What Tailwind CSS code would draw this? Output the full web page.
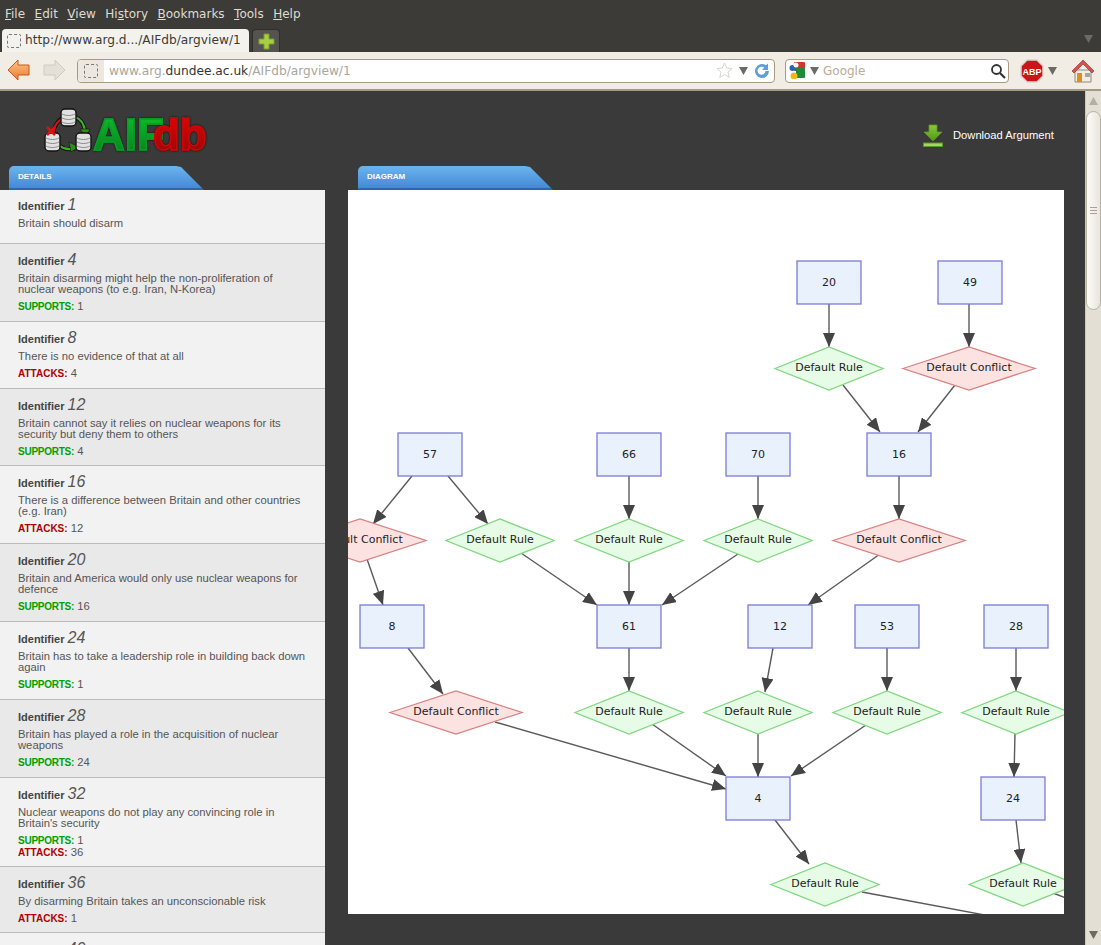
<!DOCTYPE html>
<html lang="en">
<head>
    <meta charset="UTF-8">
    <title>AIFdb argview</title>
    <script src="https://cdn.jsdelivr.net/npm/@tailwindcss/browser@4"></script>
</head>
<body class="bg-[#3a3a3a] overflow-hidden font-['Liberation_Sans',sans-serif]">
<div class="w-[1101px] h-[945px] flex flex-col overflow-hidden">

    <!-- Menu bar -->
    <div class="h-[26px] shrink-0 bg-[#3c3b37] flex items-center pl-[5px] gap-[9.5px] pt-[1px] font-['DejaVu_Sans',sans-serif] text-[12px] text-[#dfdbd2]">
        <span><u>F</u>ile</span>
        <span><u>E</u>dit</span>
        <span><u>V</u>iew</span>
        <span>Hi<u>s</u>tory</span>
        <span><u>B</u>ookmarks</span>
        <span><u>T</u>ools</span>
        <span><u>H</u>elp</span>
    </div>

    <!-- Tab bar -->
    <div class="h-[26px] shrink-0 bg-[#3c3b37] flex items-end pl-[2px] gap-[3px] relative">
        <div class="w-[247px] h-[23px] bg-[#f4f2ec] rounded-t-[4px] flex items-center pl-[5px] gap-[4px] font-['DejaVu_Sans',sans-serif] text-[12.2px] text-[#3c3b37]">
            <div class="w-[14px] h-[14px] rounded-[2px] border border-dashed border-[#777]"></div>
            <span>http://www.arg.d.../AIFdb/argview/1</span>
        </div>
        <div class="w-[28px] h-[23px] bg-[#55534e] rounded-t-[4px] flex items-center justify-center border border-b-0 border-[#2f2e2b]">
            <svg width="17" height="17" viewBox="0 0 17 17"><path d="M6 1h5v5h5v5h-5v5H6v-5H1V6h5z" fill="#a6cf45" stroke="#7d9c2c"/></svg>
        </div>
        <svg class="absolute right-[8px] top-[9px]" width="9" height="8" viewBox="0 0 9 8"><path d="M0 0h9L4.500 8z" fill="#6b6a65"/></svg>
    </div>

    <!-- Nav bar -->
    <div class="h-[39px] shrink-0 bg-[#f1ede5] border-b-2 border-[#a39a86] flex items-center">
        <svg class="ml-[7px]" width="23" height="24" viewBox="0 0 23 24">
            <defs><linearGradient id="back" x1="0" y1="0" x2="0" y2="1"><stop offset="0" stop-color="#fbc48c"/><stop offset="1" stop-color="#ea7c2c"/></linearGradient></defs>
            <path d="M11 1 1 11l10 10v-5h11V6H11z" fill="url(#back)" stroke="#c8591a"/>
        </svg>
        <svg class="ml-[13px]" width="23" height="24" viewBox="0 0 23 24"><path d="M12 1l10 10-10 10v-5H1V6h11z" fill="#e4e0d8" stroke="#cfcabf"/></svg>
        <!-- url box -->
        <div class="ml-[11px] w-[698px] h-[24px] bg-white border border-[#a79a80] rounded-[4px] flex items-center overflow-hidden">
            <div class="w-[26px] h-full bg-[#ece8e0] flex items-center justify-center shrink-0">
                <div class="w-[14px] h-[14px] rounded-[2px] border border-dashed border-[#777]"></div>
            </div>
            <div class="ml-[5px] pt-[1px] flex-1 font-['DejaVu_Sans',sans-serif] text-[12.2px] text-[#a9a59e]">www.arg.<span class="text-[#2e3436]">dundee.ac.uk</span>/AIFdb/argview/1</div>
            <svg width="17" height="17" viewBox="0 0 17 17"><path d="M8.500 1l2.200 5 5.300.5-4 3.600 1.200 5.300-4.700-2.800-4.700 2.800L5 10.100l-4-3.600L6.300 6z" fill="#fff" stroke="#d5d3ce"/></svg>
            <svg class="ml-[6px]" width="9" height="8" viewBox="0 0 9 8"><path d="M0 0h9L4.500 8z" fill="#6b6a65"/></svg>
            <svg class="ml-[6px] mr-[4px]" width="16" height="16" viewBox="0 0 16 16"><path d="M15 8a7 7 0 1 1-3-5.800L14 .5V7H8l2.200-2.200A4 4 0 1 0 11.500 8z" fill="#5d9edb"/></svg>
        </div>
        <!-- search box -->
        <div class="ml-[10px] w-[224px] h-[24px] bg-white border border-[#a79a80] rounded-[4px] flex items-center">
            <svg class="ml-[3px]" width="17" height="17" viewBox="0 0 17 17">
                <rect x="5" y="0" width="11" height="9" rx="1" fill="#d4352b"/>
                <rect x="7" y="6" width="9" height="10" rx="1" fill="#1f8a3a"/>
                <circle cx="3.500" cy="6" r="3" fill="#2266b8"/>
                <circle cx="7" cy="3" r="2.500" fill="#fff"/>
                <circle cx="5" cy="14" r="3.500" fill="#f2b619"/>
            </svg>
            <svg class="ml-[4px]" width="9" height="8" viewBox="0 0 9 8"><path d="M0 0h9L4.500 8z" fill="#6b6a65"/></svg>
            <span class="ml-[4px] pt-[1px] flex-1 font-['DejaVu_Sans',sans-serif] text-[12px] text-[#b9ab96]">Google</span>
            <svg class="mr-[2px]" width="16" height="16" viewBox="0 0 16 16"><circle cx="6.500" cy="6.500" r="4.500" fill="none" stroke="#333" stroke-width="1.800"/><path d="M10 10l5 5" stroke="#333" stroke-width="2.200"/></svg>
        </div>
        <svg class="ml-[11px]" width="24" height="24" viewBox="0 0 24 24">
            <path d="M7 1h10l6 6v10l-6 6H7l-6-6V7z" fill="#c9161a" stroke="#d9d6d0" stroke-width="1.500"/>
            <text x="12" y="15.500" text-anchor="middle" font-family="Liberation Sans" font-weight="700" font-size="9" fill="#fff">ABP</text>
        </svg>
        <svg class="ml-[4px]" width="9" height="8" viewBox="0 0 9 8"><path d="M0 0h9L4.500 8z" fill="#6b6a65"/></svg>
        <svg class="ml-[14px]" width="24" height="24" viewBox="0 0 24 24">
            <path d="M4 11h16v12H4z" fill="#f1eee6" stroke="#8b8980"/>
            <path d="M12 1 1 12l2 2 9-9 9 9 2-2z" fill="#d1524f" stroke="#a83230" stroke-width=".7"/>
            <rect x="6" y="14" width="5" height="9" fill="#d9901c"/>
            <rect x="14" y="14" width="5" height="4" fill="#a7a59f"/>
        </svg>
    </div>

    <!-- Page -->
    <div class="flex-1 flex min-h-0">
        <div class="w-[1085px] shrink-0 flex flex-col min-h-0">

            <!-- Site header -->
            <div class="h-[75px] shrink-0 flex relative">
                <svg class="ml-[44px] mt-[17px] shrink-0" width="49" height="46" viewBox="0 0 49 46">
                    <path d="M9 26C10 17 15 11 21 9" fill="none" stroke="#111" stroke-width="4"/>
                    <path d="M9 26C10 17 15 11 21 9" fill="none" stroke="#e01010" stroke-width="2.200"/>
                    <path d="M31 9c6 2 9 7 10 14" fill="none" stroke="#111" stroke-width="4"/>
                    <path d="M31 9c6 2 9 7 10 14" fill="none" stroke="#3cb521" stroke-width="2.200"/>
                    <path d="M36 21l10 0-4 8z" fill="#2e8f16" stroke="#111" stroke-width=".6"/>
                    <path d="M16 38c5 4 10 4 16 2" fill="none" stroke="#111" stroke-width="4"/>
                    <path d="M16 38c5 4 10 4 16 2" fill="none" stroke="#3cb521" stroke-width="2.200"/>
                    <path d="M25 34l10 5-8 5z" fill="#2e8f16" stroke="#111" stroke-width=".6"/>
                    <g stroke="#111" stroke-width="1.400">
                        <rect x="17" y="1" width="15" height="17" rx="4" fill="#e2e2e2"/>
                        <rect x="1" y="25" width="15" height="18" rx="4" fill="#e2e2e2"/>
                        <rect x="32" y="25" width="15" height="18" rx="4" fill="#e2e2e2"/>
                    </g>
                    <path d="M18 6c4 2 9 2 13 0M18 10c4 2 9 2 13 0M18 14c4 2 9 2 13 0M2 30c4 2 9 2 13 0M2 34c4 2 9 2 13 0M2 38c4 2 9 2 13 0M33 30c4 2 9 2 13 0M33 34c4 2 9 2 13 0M33 38c4 2 9 2 13 0" fill="none" stroke="#8a8a8a"/>
                    <path d="M3 19l8 8M11 19l-8 8" stroke="#e01010" stroke-width="2.500"/>
                </svg>
                <div class="mt-[18px] h-[52px] text-[44px] font-bold leading-[52px] flex drop-shadow-[0_0_1px_#111]">
                    <span class="bg-linear-to-b from-[#12c430] to-[#047a1c] bg-clip-text text-transparent [-webkit-text-stroke:1.5px_#0a9c26]">AIF</span>
                    <span class="ml-[-11px] bg-linear-to-b from-[#f00000] to-[#8f0606] bg-clip-text text-transparent [-webkit-text-stroke:1.5px_#c80a0a]">db</span>
                </div>
                <div class="absolute left-[923px] top-[33px] flex items-center gap-[10px]">
                    <svg width="20" height="23" viewBox="0 0 20 23">
                        <defs><linearGradient id="dl" x1="0" y1="0" x2="0" y2="1"><stop offset="0" stop-color="#8cc63f"/><stop offset="1" stop-color="#4f9a12"/></linearGradient></defs>
                        <path d="M6 1h8v7h5l-9 9-9-9h5z" fill="url(#dl)" stroke="#5c9a1c" stroke-width=".8"/>
                        <rect x="0.500" y="19" width="19" height="3.500" fill="#a6d465" stroke="#5c9a1c"/>
                    </svg>
                    <span class="text-[11.2px] text-white">Download Argument</span>
                </div>
            </div>

            <div class="flex-1 flex min-h-0">
                <!-- Details column -->
                <div class="w-[325px] shrink-0 flex flex-col min-h-0">
                    <div class="h-[24px] shrink-0 ml-[9px] w-[195px] pl-[9px] pt-[4px] rounded-tl-[5px] border-b-2 border-[#2c68b0] bg-linear-to-b from-[#6cb4ee] to-[#4589d6] [clip-path:polygon(0_0,167px_0,172px_1px,195px_24px,0_24px)] text-[8px] font-bold text-white leading-[13px]">DETAILS</div>
                    <div class="flex-1 overflow-hidden text-[11.25px] text-[#555] leading-[11px]">
                        <div class="bg-[#f2f2f2] border-b border-[#bbb] pt-[6px] pb-[14px] px-[18px]">
                            <div class="h-[22px] leading-[17px] text-[11px] font-bold text-[#444]">Identifier <span class="text-[16px] italic font-normal text-[#555]">1</span></div>
                            <div>Britain should disarm</div>
                        </div>
                        <div class="bg-[#e9e9e9] border-b border-[#bbb] pt-[7px] pb-[9px] px-[18px]">
                            <div class="h-[22px] leading-[18px] text-[11px] font-bold text-[#444]">Identifier <span class="text-[16px] italic font-normal text-[#555]">4</span></div>
                            <div>Britain disarming might help the non-proliferation of<br>nuclear weapons (to e.g. Iran, N-Korea)</div>
                            <div class="mt-[5px] leading-[12px]"><b class="text-[10px] leading-[10px] tracking-[-0.25px] text-[#00a000]">SUPPORTS:</b> 1</div>
                        </div>
                        <div class="bg-[#f2f2f2] border-b border-[#bbb] pt-[7px] pb-[9px] px-[18px]">
                            <div class="h-[22px] leading-[18px] text-[11px] font-bold text-[#444]">Identifier <span class="text-[16px] italic font-normal text-[#555]">8</span></div>
                            <div>There is no evidence of that at all</div>
                            <div class="mt-[5px] leading-[12px]"><b class="text-[10px] leading-[10px] text-[#b00000]">ATTACKS:</b> 4</div>
                        </div>
                        <div class="bg-[#e9e9e9] border-b border-[#bbb] pt-[7px] pb-[8px] px-[18px]">
                            <div class="h-[22px] leading-[18px] text-[11px] font-bold text-[#444]">Identifier <span class="text-[16px] italic font-normal text-[#555]">12</span></div>
                            <div>Britain cannot say it relies on nuclear weapons for its<br>security but deny them to others</div>
                            <div class="mt-[5px] leading-[12px]"><b class="text-[10px] leading-[10px] tracking-[-0.25px] text-[#00a000]">SUPPORTS:</b> 4</div>
                        </div>
                        <div class="bg-[#f2f2f2] border-b border-[#bbb] pt-[7px] pb-[9px] px-[18px]">
                            <div class="h-[22px] leading-[18px] text-[11px] font-bold text-[#444]">Identifier <span class="text-[16px] italic font-normal text-[#555]">16</span></div>
                            <div>There is a difference between Britain and other countries<br>(e.g. Iran)</div>
                            <div class="mt-[5px] leading-[12px]"><b class="text-[10px] leading-[10px] text-[#b00000]">ATTACKS:</b> 12</div>
                        </div>
                        <div class="bg-[#e9e9e9] border-b border-[#bbb] pt-[7px] pb-[9px] px-[18px]">
                            <div class="h-[22px] leading-[18px] text-[11px] font-bold text-[#444]">Identifier <span class="text-[16px] italic font-normal text-[#555]">20</span></div>
                            <div>Britain and America would only use nuclear weapons for<br>defence</div>
                            <div class="mt-[5px] leading-[12px]"><b class="text-[10px] leading-[10px] tracking-[-0.25px] text-[#00a000]">SUPPORTS:</b> 16</div>
                        </div>
                        <div class="bg-[#f2f2f2] border-b border-[#bbb] pt-[7px] pb-[9px] px-[18px]">
                            <div class="h-[22px] leading-[18px] text-[11px] font-bold text-[#444]">Identifier <span class="text-[16px] italic font-normal text-[#555]">24</span></div>
                            <div>Britain has to take a leadership role in building back down<br>again</div>
                            <div class="mt-[5px] leading-[12px]"><b class="text-[10px] leading-[10px] tracking-[-0.25px] text-[#00a000]">SUPPORTS:</b> 1</div>
                        </div>
                        <div class="bg-[#e9e9e9] border-b border-[#bbb] pt-[7px] pb-[9px] px-[18px]">
                            <div class="h-[22px] leading-[18px] text-[11px] font-bold text-[#444]">Identifier <span class="text-[16px] italic font-normal text-[#555]">28</span></div>
                            <div>Britain has played a role in the acquisition of nuclear<br>weapons</div>
                            <div class="mt-[5px] leading-[12px]"><b class="text-[10px] leading-[10px] tracking-[-0.25px] text-[#00a000]">SUPPORTS:</b> 24</div>
                        </div>
                        <div class="bg-[#f2f2f2] border-b border-[#bbb] pt-[7px] pb-[8px] px-[18px]">
                            <div class="h-[22px] leading-[18px] text-[11px] font-bold text-[#444]">Identifier <span class="text-[16px] italic font-normal text-[#555]">32</span></div>
                            <div>Nuclear weapons do not play any convincing role in<br>Britain's security</div>
                            <div class="mt-[5px] leading-[12px]"><b class="text-[10px] leading-[10px] tracking-[-0.25px] text-[#00a000]">SUPPORTS:</b> 1</div>
                            <div class="leading-[12px]"><b class="text-[10px] leading-[10px] text-[#b00000]">ATTACKS:</b> 36</div>
                        </div>
                        <div class="bg-[#e9e9e9] border-b border-[#bbb] pt-[7px] pb-[8px] px-[18px]">
                            <div class="h-[22px] leading-[18px] text-[11px] font-bold text-[#444]">Identifier <span class="text-[16px] italic font-normal text-[#555]">36</span></div>
                            <div>By disarming Britain takes an unconscionable risk</div>
                            <div class="mt-[5px] leading-[12px]"><b class="text-[10px] leading-[10px] text-[#b00000]">ATTACKS:</b> 1</div>
                        </div>
                        <div class="bg-[#f2f2f2] pt-[7px] px-[18px] h-[40px]">
                            <div class="h-[22px] leading-[18px] text-[11px] font-bold text-[#444]">Identifier <span class="text-[16px] italic font-normal text-[#555]">40</span></div>
                        </div>
                    </div>
                </div>

                <!-- Diagram column -->
                <div class="ml-[23px] w-[716px] shrink-0 flex flex-col min-h-0">
                    <div class="h-[24px] shrink-0 ml-[10px] w-[195px] pl-[9px] pt-[4px] rounded-tl-[5px] border-b-2 border-[#2c68b0] bg-linear-to-b from-[#6cb4ee] to-[#4589d6] [clip-path:polygon(0_0,167px_0,172px_1px,195px_24px,0_24px)] text-[8px] font-bold text-white leading-[13px]">DIAGRAM</div>
                    <div class="h-[724px] shrink-0 bg-white overflow-hidden">
                        <svg width="716" height="724" viewBox="348 190 716 724" font-family="DejaVu Sans" font-size="11" fill="#222" text-anchor="middle">
                            <defs>
                                <marker id="ah" markerUnits="userSpaceOnUse" markerWidth="14" markerHeight="12" refX="14" refY="6" orient="auto"><path d="M0 0L14 6 0 12z" fill="#444"/></marker>
                            </defs>
                            <!-- edges -->
                            <g stroke="#5a5a5a" stroke-width="1.400">
                                <line x1="829" y1="304" x2="829" y2="347" marker-end="url(#ah)"/>
                                <line x1="969" y1="304" x2="969" y2="347" marker-end="url(#ah)"/>
                                <line x1="843" y1="385" x2="880" y2="432" marker-end="url(#ah)"/>
                                <line x1="955" y1="385" x2="918" y2="432" marker-end="url(#ah)"/>
                                <line x1="412" y1="476" x2="373" y2="524" marker-end="url(#ah)"/>
                                <line x1="448" y1="476" x2="488" y2="524" marker-end="url(#ah)"/>
                                <line x1="629" y1="476" x2="629" y2="519" marker-end="url(#ah)"/>
                                <line x1="758" y1="476" x2="758" y2="519" marker-end="url(#ah)"/>
                                <line x1="899" y1="476" x2="899" y2="519" marker-end="url(#ah)"/>
                                <line x1="367" y1="559" x2="383" y2="605" marker-end="url(#ah)"/>
                                <line x1="521" y1="553" x2="597" y2="605" marker-end="url(#ah)"/>
                                <line x1="629" y1="562" x2="629" y2="605" marker-end="url(#ah)"/>
                                <line x1="738" y1="554" x2="662" y2="605" marker-end="url(#ah)"/>
                                <line x1="880" y1="554" x2="808" y2="605" marker-end="url(#ah)"/>
                                <line x1="408" y1="648" x2="443" y2="694" marker-end="url(#ah)"/>
                                <line x1="629" y1="648" x2="629" y2="691" marker-end="url(#ah)"/>
                                <line x1="773" y1="648" x2="765" y2="692" marker-end="url(#ah)"/>
                                <line x1="887" y1="648" x2="887" y2="691" marker-end="url(#ah)"/>
                                <line x1="1016" y1="648" x2="1016" y2="691" marker-end="url(#ah)"/>
                                <line x1="495" y1="722" x2="726" y2="789" marker-end="url(#ah)"/>
                                <line x1="652" y1="724" x2="726" y2="776" marker-end="url(#ah)"/>
                                <line x1="758" y1="733" x2="758" y2="777" marker-end="url(#ah)"/>
                                <line x1="866" y1="725" x2="791" y2="776" marker-end="url(#ah)"/>
                                <line x1="1015" y1="733" x2="1014" y2="777" marker-end="url(#ah)"/>
                                <line x1="775" y1="820" x2="809" y2="864" marker-end="url(#ah)"/>
                                <line x1="1016" y1="820" x2="1021" y2="863" marker-end="url(#ah)"/>
                                <line x1="862" y1="892" x2="990" y2="916"/>
                                <line x1="1053" y1="893" x2="1066" y2="898"/>
                            </g>
                            <!-- information nodes -->
                            <g stroke="#7b7bd8" stroke-width="1.300" fill="#e9f1fd">
                                <rect x="797" y="261" width="64" height="43"/>
                                <rect x="938" y="261" width="64" height="43"/>
                                <rect x="398" y="433" width="64" height="43"/>
                                <rect x="597" y="433" width="64" height="43"/>
                                <rect x="726" y="433" width="64" height="43"/>
                                <rect x="867" y="433" width="64" height="43"/>
                                <rect x="360" y="605" width="64" height="43"/>
                                <rect x="597" y="605" width="64" height="43"/>
                                <rect x="748" y="605" width="64" height="43"/>
                                <rect x="855" y="605" width="64" height="43"/>
                                <rect x="984" y="605" width="64" height="43"/>
                                <rect x="726" y="777" width="64" height="43"/>
                                <rect x="981" y="777" width="64" height="43"/>
                            </g>
                            <!-- rule nodes -->
                            <g stroke="#7fd67f" stroke-width="1.300" fill="#e6fce6">
                                <path d="M775 368.500l54-21.500 54 21.500-54 21.500z"/>
                                <path d="M446 540.500l54-21.500 54 21.500-54 21.500z"/>
                                <path d="M575 540.500l54-21.500 54 21.500-54 21.500z"/>
                                <path d="M704 540.500l54-21.500 54 21.500-54 21.500z"/>
                                <path d="M575 712.500l54-21.500 54 21.500-54 21.500z"/>
                                <path d="M704 712.500l54-21.500 54 21.500-54 21.500z"/>
                                <path d="M833 712.500l54-21.500 54 21.500-54 21.500z"/>
                                <path d="M962 712.500l54-21.500 54 21.500-54 21.500z"/>
                                <path d="M771 884.500l54-21.500 54 21.500-54 21.500z"/>
                                <path d="M969 884.500l54-21.500 54 21.500-54 21.500z"/>
                            </g>
                            <!-- conflict nodes -->
                            <g stroke="#d98080" stroke-width="1.300" fill="#fde2e2">
                                <path d="M903 368.500l66-21.500 66 21.500-66 21.500z"/>
                                <path d="M294 540.500l66-21.500 66 21.500-66 21.500z"/>
                                <path d="M833 540.500l66-21.500 66 21.500-66 21.500z"/>
                                <path d="M390 712.500l66-21.500 66 21.500-66 21.500z"/>
                            </g>
                            <g>
                                <text x="829" y="286">20</text>
                                <text x="970" y="286">49</text>
                                <text x="430" y="458">57</text>
                                <text x="629" y="458">66</text>
                                <text x="758" y="458">70</text>
                                <text x="899" y="458">16</text>
                                <text x="392" y="630">8</text>
                                <text x="629" y="630">61</text>
                                <text x="780" y="630">12</text>
                                <text x="887" y="630">53</text>
                                <text x="1016" y="630">28</text>
                                <text x="758" y="802">4</text>
                                <text x="1013" y="802">24</text>
                                <text x="829" y="371">Default Rule</text>
                                <text x="969" y="371">Default Conflict</text>
                                <text x="360" y="543">Default Conflict</text>
                                <text x="500" y="543">Default Rule</text>
                                <text x="629" y="543">Default Rule</text>
                                <text x="758" y="543">Default Rule</text>
                                <text x="899" y="543">Default Conflict</text>
                                <text x="456" y="715">Default Conflict</text>
                                <text x="629" y="715">Default Rule</text>
                                <text x="758" y="715">Default Rule</text>
                                <text x="887" y="715">Default Rule</text>
                                <text x="1016" y="715">Default Rule</text>
                                <text x="825" y="887">Default Rule</text>
                                <text x="1023" y="887">Default Rule</text>
                            </g>
                        </svg>
                    </div>
                </div>
            </div>
        </div>

        <!-- Scrollbar -->
        <div class="w-[16px] shrink-0 bg-[#e4dfd5] border-l border-[#cfc9bc] flex flex-col items-center">
            <svg class="mt-[6px] shrink-0" width="9" height="8" viewBox="0 0 9 8"><path d="M0 8h9L4.500 0z" fill="#b5afa3"/></svg>
            <div class="mt-[6px] w-[15px] h-[199px] rounded-[8px] bg-linear-to-r from-[#fdfcfa] to-[#e9e5dc] border border-[#b9b2a3] flex flex-col items-center justify-center gap-[2px]">
                <div class="w-[7px] h-[1px] bg-[#a8a294]"></div>
                <div class="w-[7px] h-[1px] bg-[#a8a294]"></div>
                <div class="w-[7px] h-[1px] bg-[#a8a294]"></div>
            </div>
            <svg class="mt-auto mb-[6px] shrink-0" width="9" height="8" viewBox="0 0 9 8"><path d="M0 0h9L4.500 8z" fill="#6b6a65"/></svg>
        </div>
    </div>
</div>
</body>
</html>
